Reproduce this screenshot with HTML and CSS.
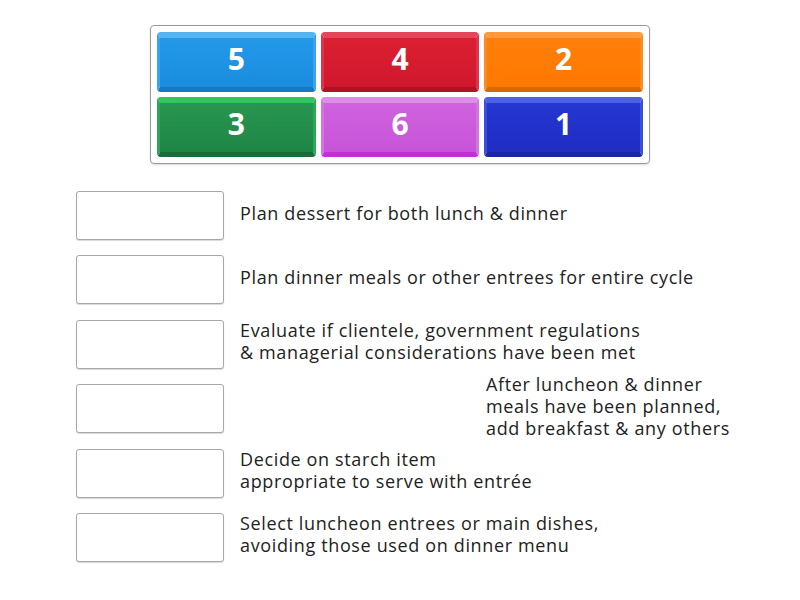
FILE: index.html
```html
<!DOCTYPE html>
<html>
<head>
<meta charset="utf-8">
<link rel="stylesheet" href="styles.css">
</head>
<body>
<div class="page">
  <div class="tray">
    <div class="tile blue">5</div>
    <div class="tile red">4</div>
    <div class="tile orange">2</div>
    <div class="tile green">3</div>
    <div class="tile purple">6</div>
    <div class="tile navy">1</div>
  </div>
  <div class="rows">
    <div class="row"><div class="slot"></div><div class="label">Plan dessert for both lunch &amp; dinner</div></div>
    <div class="row"><div class="slot"></div><div class="label">Plan dinner meals or other entrees for entire cycle</div></div>
    <div class="row"><div class="slot"></div><div class="label">Evaluate if clientele, government regulations<br>&amp; managerial considerations have been met</div></div>
    <div class="row"><div class="slot"></div><div class="label label-far">After luncheon &amp; dinner<br>meals have been planned,<br>add breakfast &amp; any others</div></div>
    <div class="row"><div class="slot"></div><div class="label">Decide on starch item<br>appropriate to serve with entrée</div></div>
    <div class="row"><div class="slot"></div><div class="label">Select luncheon entrees or main dishes,<br>avoiding those used on dinner menu</div></div>
  </div>
</div>
</body>
</html>
```

FILE: styles.css
```css
* { box-sizing: border-box; }
html, body { margin: 0; padding: 0; background: #fff; }
body { font-family: "Open Sans", "DejaVu Sans", sans-serif; color: #222; }
.page { width: 800px; height: 600px; padding-top: 25px; }

.tray {
  margin-left: 150px;
  width: 500px;
  border: 1px solid #9a9a9a;
  border-radius: 4px;
  padding: 6px;
  display: grid;
  grid-template-columns: repeat(3, 1fr);
  grid-auto-rows: 60px;
  gap: 5px 5px;
  box-shadow: 0 1px 2px rgba(0,0,0,0.15);
}
.tile {
  border-radius: 4px;
  color: #fff;
  font-weight: 700;
  font-size: 30px;
  display: flex;
  align-items: center;
  justify-content: center;
  border-style: solid;
  border-width: 6px 3px 5px 3px;
  line-height: 1;
  padding-bottom: 7px;
}
.blue { background: linear-gradient(#2399ea, #1a8cde); border-color: #55b3f2 #3aa3ee #1679c4 #3aa3ee; }
.red { background: linear-gradient(#dc1f33, #d0182c); border-color: #e4475a #df3347 #b01424 #df3347; }
.orange { background: linear-gradient(#ff7f0a, #ff7800); border-color: #ff9a3c #ff8c22 #d86800 #ff8c22; }
.green { background: linear-gradient(#279650, #1f8646); border-color: #34c462 #2aa856 #1a6c38 #2aa856; }
.purple { background: linear-gradient(#cf62de, #c754d8); border-color: #dc8de6 #d474e0 #c030d4 #d474e0; }
.navy { background: linear-gradient(#2536d2, #1f2dc2); border-color: #4d60e4 #3a4ddc #1a26a2 #3a4ddc; }

.rows {
  margin-top: 27px;
  margin-left: 76px;
  display: flex;
  flex-direction: column;
  gap: 15.4px;
}
.row { display: flex; align-items: center; height: 49px; }
.slot {
  flex: none;
  width: 148px;
  height: 49px;
  border: 1px solid #a8a8a8;
  border-radius: 3px;
  background: #fff;
  box-shadow: 0 1px 1px rgba(0,0,0,0.15);
}
.label {
  margin-left: 16px;
  font-size: 18px;
  letter-spacing: 0.64px;
  line-height: 22px;
  color: #222;
  white-space: nowrap;
  padding-bottom: 6px;
}
.label-far { margin-left: 262px; }
```
